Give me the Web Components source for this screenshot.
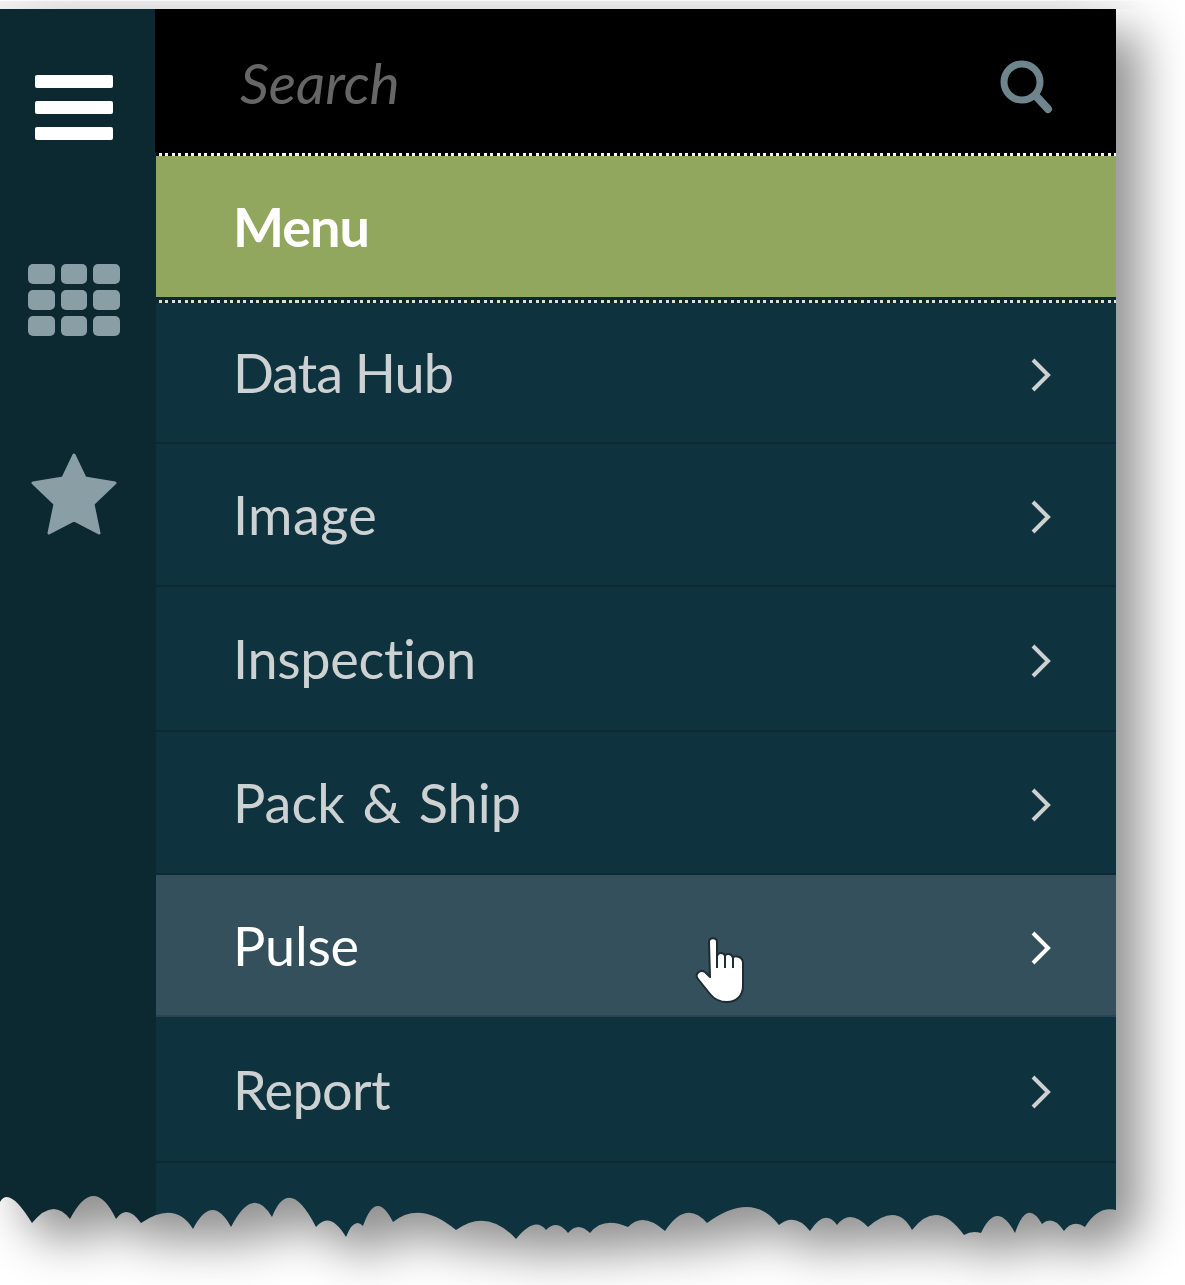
<!DOCTYPE html>
<html>
<head>
<meta charset="utf-8">
<title>Menu</title>
<style>
  html, body { margin: 0; padding: 0; background: #fff; }
  body { width: 1185px; height: 1285px; overflow: hidden; font-family: Lato, "Noto Sans", sans-serif; }
</style>
</head>
<body>
<torn-frame>
  <side-rail slot="rail"></side-rail>
  <search-bar></search-bar>
  <dotted-line></dotted-line>
  <menu-header>Menu</menu-header>
  <dotted-line class="dim"></dotted-line>
  <!-- letter-spacing per row: the original face is not installed, this keeps the text widths -->
  <menu-row style="height:141px;letter-spacing:-1px">Data Hub</menu-row>
  <menu-row style="height:143px;letter-spacing:.4px">Image</menu-row>
  <menu-row style="height:145px;letter-spacing:-.3px">Inspection</menu-row>
  <menu-row style="height:143px;word-spacing:4px">Pack &amp; Ship</menu-row>
  <menu-row style="height:142px;letter-spacing:-.2px" active>Pulse</menu-row>
  <menu-row style="height:146px;letter-spacing:-.6px">Report</menu-row>
  <menu-row style="height:100px" last></menu-row>
</torn-frame>

<script>
// torn bottom edge of the screenshot, traced by hand: valley, peak, valley, peak...
const TORN_EDGE = [
  [0,1202],[9,1199],[32,1223],[53,1209],[70,1219],[94,1196],[116,1219],[127,1212],[141,1223],
  [175,1213],[193,1229],[212,1210],[231,1227],[253,1203],[272,1217],[289,1198],[316,1227],
  [330,1221],[346,1237],[354,1224],[363,1226],[376,1206],[393,1222],[420,1213],[456,1230],
  [487,1221],[516,1239],[535,1225],[546,1230],[557,1225],[568,1233],[578,1227],[590,1233],
  [603,1223],[628,1227],[643,1220],[665,1231],[686,1213],[707,1223],[752,1207],[779,1225],
  [795,1220],[810,1231],[825,1218],[837,1225],[850,1217],[868,1227],[897,1215],
  [912,1230],[937,1215],[964,1235],[972,1232],[981,1233],[997,1216],[1015,1233],[1027,1213],
  [1042,1224],[1053,1221],[1064,1231],[1073,1224],[1085,1227],[1098,1212],[1116,1210]
];

function tornClipPath() {
  let d = 'M0 0 L1116 0 L1116 ' + (TORN_EDGE[TORN_EDGE.length - 1][1] - 9);
  // walk right to left, every peak pulls a curve between two sharp valleys
  for (let i = TORN_EDGE.length - 1; i >= 2; i -= 2) {
    const [x2, y2] = TORN_EDGE[i];
    const [px, py] = TORN_EDGE[i - 1];
    const [x0, y0] = TORN_EDGE[i - 2];
    const cy = 2 * py - (y0 + y2) / 2;
    d += ` Q${px} ${cy - 9} ${x0} ${y0 - 9}`;
  }
  return `path("${d} Z")`;
}

class TornFrame extends HTMLElement {
  constructor() {
    super();
    this.attachShadow({ mode: 'open' });
    this.shadowRoot.innerHTML = `
      <style>
        :host { display: block; position: relative; width: 1185px; height: 1285px; font-variant-ligatures: none; }
        .strip { height: 8px; margin-top: 1px; width: 1150px; background: linear-gradient(90deg, #f1f1f1 92%, #fff); }
        .shadow { filter: drop-shadow(24px 24px 24px rgba(0,0,0,.44)); width: 1116px; }
        .frame { display: flex; width: 1116px; height: 1240px; clip-path: ${tornClipPath()}; }
        .main { flex: 1; display: flex; flex-direction: column; background: #0f333e; }
      </style>
      <div class="strip"></div>
      <div class="shadow">
        <div class="frame">
          <slot name="rail"></slot>
          <div class="main"><slot></slot></div>
        </div>
      </div>
    `;
  }
}

class SideRail extends HTMLElement {
  constructor() {
    super();
    this.attachShadow({ mode: 'open' });
    this.shadowRoot.innerHTML = `
      <style>
        :host { display: flex; flex-direction: column; align-items: center; width: 156px; height: 100%; flex: none; background: #0c2831; box-sizing: border-box; padding-right: 8px; }
        svg { display: block; flex: none; }
        .burger { margin-top: 66px; }
        .apps { margin-top: 123px; }
        .star { margin-top: 117px; }
      </style>
      <svg class="burger" width="78" height="66" viewBox="0 0 78 66" fill="#fff">
        <rect x="0" y="0" width="78" height="13" rx="2"/>
        <rect x="0" y="26" width="78" height="13" rx="2"/>
        <rect x="0" y="52" width="78" height="13" rx="2"/>
      </svg>
      <svg class="apps" width="92" height="72" viewBox="0 0 92 72" fill="#8a9ea6">
        <rect x="0" y="0" width="27" height="20" rx="5"/><rect x="33" y="0" width="26" height="20" rx="5"/><rect x="65" y="0" width="27" height="20" rx="5"/>
        <rect x="0" y="26" width="27" height="20" rx="5"/><rect x="33" y="26" width="26" height="20" rx="5"/><rect x="65" y="26" width="27" height="20" rx="5"/>
        <rect x="0" y="52" width="27" height="20" rx="5"/><rect x="33" y="52" width="26" height="20" rx="5"/><rect x="65" y="52" width="27" height="20" rx="5"/>
      </svg>
      <svg class="star" width="86" height="82" viewBox="0 0 86 82" fill="#8a9ea6" stroke="#8a9ea6" stroke-width="3" stroke-linejoin="round">
        <path d="M43 2 L54 25 L84 30 L62 51 L68 80 L43 67 L18 80 L24 51 L2 30 L32 25 Z"/>
      </svg>
    `;
  }
}

class SearchBar extends HTMLElement {
  constructor() {
    super();
    this.attachShadow({ mode: 'open' });
    this.shadowRoot.innerHTML = `
      <style>
        :host { display: flex; align-items: center; justify-content: space-between; height: 144px; box-sizing: border-box; flex: none; background: #000; padding: 12px 62px 0 85px; margin-left: -1px; }
        span { font: italic 400 57px Lato, "Noto Sans", sans-serif; color: #666; margin-top: -11px; }
      </style>
      <span>Search</span>
      <svg width="54" height="54" viewBox="0 0 54 54" fill="none" stroke="#6f858d">
        <circle cx="22" cy="22" r="18" stroke-width="7"/>
        <path d="M36 36 L48 49" stroke-width="8" stroke-linecap="round"/>
      </svg>
    `;
  }
}

class DottedLine extends HTMLElement {
  constructor() {
    super();
    this.attachShadow({ mode: 'open' });
    this.shadowRoot.innerHTML = `
      <style>
        :host { display: block; flex: none; height: 3px; background: #000; }
        :host(.dim) { height: 6px; background: #0c2831; }
        div { height: 3px; background: repeating-linear-gradient(90deg, #f4f4f4 0 3px, transparent 3px 6.5px); margin-left: 3px; }
        :host(.dim) div { position: relative; top: 3px; background: repeating-linear-gradient(90deg, #e6dcd6 0 3px, transparent 3px 6.5px); }
      </style>
      <div></div>
    `;
  }
}

class MenuHeader extends HTMLElement {
  constructor() {
    super();
    this.attachShadow({ mode: 'open' });
    this.shadowRoot.innerHTML = `
      <style>
        :host { display: flex; align-items: center; height: 141px; flex: none; background: #90a75d; color: #fff; padding-left: 77px; letter-spacing: -1px; font: 700 54px Lato, "Noto Sans", sans-serif; }
      </style>
      <slot></slot>
    `;
  }
}

class MenuRow extends HTMLElement {
  constructor() {
    super();
    this.attachShadow({ mode: 'open' });
    this.shadowRoot.innerHTML = `
      <style>
        :host { display: flex; align-items: center; justify-content: space-between; flex: none; box-sizing: border-box; padding: 0 64px 0 77px; color: #cdd1d2; border-bottom: 2px solid #0c2a34; font: 400 54px Lato, "Noto Sans", sans-serif; }
        :host([active]) { background: #34505c; color: #fff; border-bottom-color: #2a4450; }
        :host([last]) { border-bottom: 0; }
        :host([last]) svg { display: none; }
        svg { margin-top: 5px; }
      </style>
      <slot></slot>
      <svg width="22" height="34" viewBox="0 0 22 34" fill="none" stroke="currentColor" stroke-width="4">
        <path d="M3 2 L18 17 L3 32"/>
      </svg>
    `;
  }
}

class HandCursor extends HTMLElement {
  constructor() {
    super();
    this.attachShadow({ mode: 'open' });
    this.shadowRoot.innerHTML = `
      <style>
        :host { display: block; position: absolute; left: 695px; top: 935px; width: 52px; height: 68px; }
      </style>
      <svg width="52" height="68" viewBox="0 0 52 68" stroke="#1d2b33" stroke-width="2" stroke-linejoin="round">
        <path d="M14 6 C14 1 22 1 22 6 L22 20 C23 16 29 16 30 20 C31 17 37 17 38 22 C39 19 48 20 48 27 L48 50 C48 60 41 66 32 66 C24 66 19 63 15 58 L3 43 C-1 38 5 33 10 36 L15 41 Z" fill="#fff"/>
        <path d="M22 20 V32 M30 20 V32 M38 22 V32" fill="none"/>
      </svg>
    `;
  }
}

customElements.define('torn-frame', TornFrame);
customElements.define('side-rail', SideRail);
customElements.define('search-bar', SearchBar);
customElements.define('dotted-line', DottedLine);
customElements.define('menu-header', MenuHeader);
customElements.define('menu-row', MenuRow);
customElements.define('hand-cursor', HandCursor);

document.querySelector('torn-frame').shadowRoot.appendChild(document.createElement('hand-cursor'));
</script>
</body>
</html>
